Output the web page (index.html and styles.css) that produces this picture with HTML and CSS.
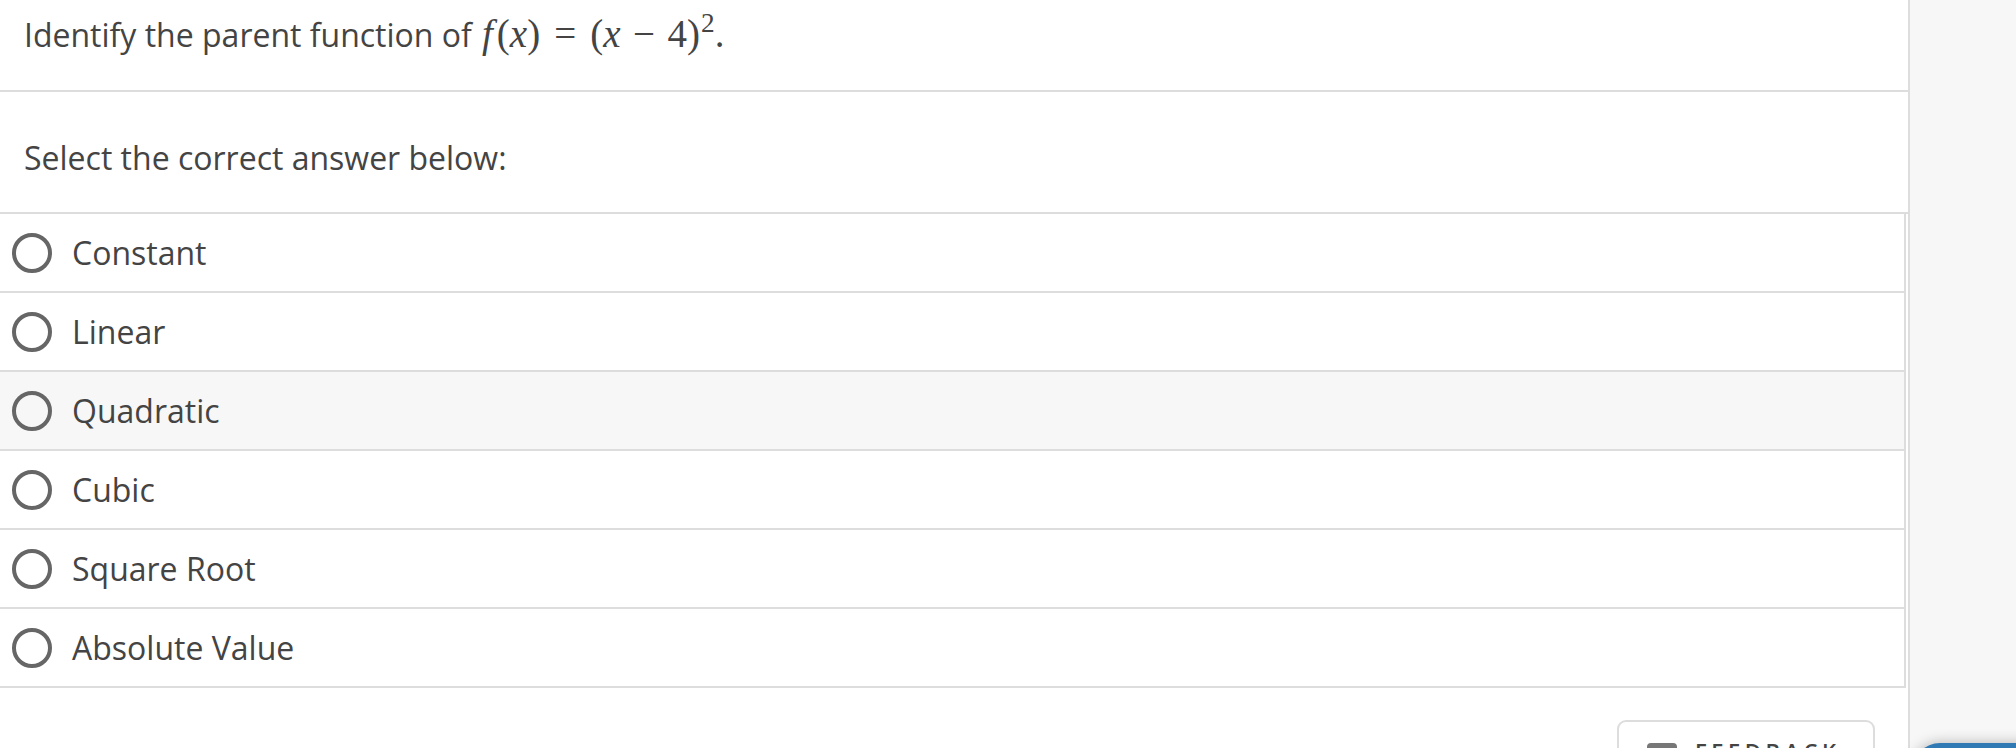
FILE: index.html
```html
<!DOCTYPE html>
<html>
<head>
<meta charset="utf-8">
<link rel="stylesheet" href="styles.css">
</head>
<body>
<div class="page">
  <div class="main">
    <div class="question">Identify the parent function of <span class="math"><i class="fn">f</i>(<i>x</i>)<span class="rel">=</span>(<i>x</i><span class="bin">−</span>4)<span class="sup">2</span>.</span></div>
    <div class="prompt">Select the correct answer below:</div>
    <ul class="options">
      <li class="option"><span class="radio"></span><span class="label">Constant</span></li>
      <li class="option"><span class="radio"></span><span class="label">Linear</span></li>
      <li class="option hover"><span class="radio"></span><span class="label">Quadratic</span></li>
      <li class="option"><span class="radio"></span><span class="label">Cubic</span></li>
      <li class="option"><span class="radio"></span><span class="label">Square Root</span></li>
      <li class="option"><span class="radio"></span><span class="label">Absolute Value</span></li>
    </ul>
    <div class="actions">
      <div class="feedback"><span class="fb-icon"></span><span class="fb-text">FEEDBACK</span></div>
    </div>
  </div>
  <div class="side"></div>
</div>
<div class="chat"></div>
</body>
</html>
```
FILE: styles.css
```css
html, body {
  margin: 0;
  padding: 0;
  height: 100%;
  overflow: hidden;
}
body {
  font-family: "Open Sans", "Liberation Sans", sans-serif;
  color: #444;
  background: #f7f7f7;
}
.page {
  display: flex;
  height: 748px;
  overflow: hidden;
}
.main {
  width: 1908px;
  flex: none;
  background: #fff;
  border-right: 2px solid #dddddd;
}
.side {
  flex: 1;
  background: #f7f7f7;
}
.question {
  box-sizing: border-box;
  height: 92px;
  padding: 12px 24px 0;
  font-size: 32px;
  line-height: 46px;
  border-bottom: 2px solid #dddddd;
  white-space: nowrap;
}
.math {
  font-family: "Liberation Serif", "Times New Roman", serif;
  font-size: 39px;
  line-height: 0;
  color: #444;
  margin-left: 2px;
}
.math i {
  font-style: italic;
}
.math .fn {
  margin-right: 0.1em;
}
.rel {
  margin: 0 0.36em;
}
.bin {
  margin: 0 0.32em;
}
.sup {
  font-size: 0.7em;
  vertical-align: 0.55em;
  line-height: 0;
  margin-left: 1px;
}
.prompt {
  box-sizing: border-box;
  height: 122px;
  padding: 43px 24px 0;
  font-size: 32px;
  line-height: 46px;
  border-bottom: 2px solid #dddddd;
}
.options {
  list-style: none;
  margin: 0 2px 0 0;
  padding: 0;
  border-right: 2px solid #dddddd;
}
.option {
  box-sizing: border-box;
  height: 79px;
  display: flex;
  align-items: center;
  padding-left: 12px;
  border-bottom: 2px solid #dddddd;
  font-size: 32px;
  line-height: 46px;
}
.option.hover {
  background: #f7f7f7;
}
.radio {
  box-sizing: border-box;
  width: 40px;
  height: 40px;
  border: 4px solid #666;
  border-radius: 50%;
  margin-right: 20px;
  flex: none;
}
.actions {
  display: flex;
  justify-content: flex-end;
  padding: 32px 33px 0 0;
}
.feedback {
  box-sizing: border-box;
  width: 258px;
  height: 70px;
  border: 2px solid #dddddd;
  border-radius: 9px;
  display: flex;
  align-items: flex-start;
  padding: 21px 0 0 28px;
  gap: 18px;
}
.fb-icon {
  width: 30px;
  height: 30px;
  background: #777;
  border-radius: 4px;
  flex: none;
}
.fb-text {
  font-size: 22px;
  font-weight: 600;
  letter-spacing: 4.5px;
  color: #444;
  line-height: 16px;
}
.chat {
  position: fixed;
  left: 1912px;
  top: 743px;
  width: 160px;
  height: 56px;
  border-radius: 28px;
  background: #2f7ab5;
  box-shadow: 0 0 14px rgba(0, 0, 0, 0.28);
}
```
